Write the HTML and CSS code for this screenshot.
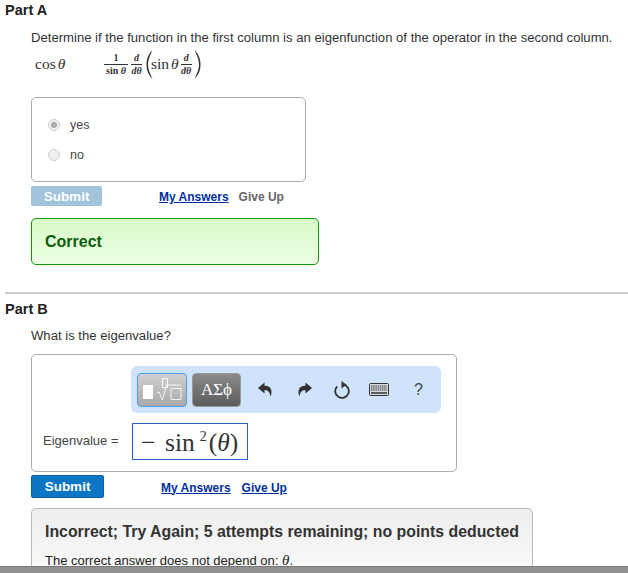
FILE: index.html
```html
<!DOCTYPE html>
<html lang="en">
<head>
<meta charset="utf-8">
<title>Part A and Part B</title>
<link rel="stylesheet" href="styles.css">
</head>
<body>
<section class="part part-a">
  <h2 class="part-title">Part A</h2>
  <div class="part-body">
    <p class="prompt">Determine if the function in the first column is an eigenfunction of the operator in the second column.</p>
    <div class="math-row">
      <div class="math fn">cos<i class="theta">θ</i></div>
      <div class="math op">
        <span class="frac wide"><span class="num">1</span><span class="den">sin <i>θ</i></span></span>
        <span class="frac plain"><span class="num"><i>d</i></span><span class="den"><i>dθ</i></span></span>
        <svg class="paren left" viewBox="0 0 9 30" width="9" height="31"><path d="M7.500 .5C3 5 1.500 10 1.500 15s1.500 10 6 14.500C5 24 3 20 3 15S5 6 7.500 .5Z"/></svg>
        <span class="sin">sin<i class="theta">θ</i></span>
        <span class="frac tight"><span class="num"><i>d</i></span><span class="den"><i>dθ</i></span></span>
        <svg class="paren right" viewBox="0 0 9 30" width="9" height="31"><path d="M1.500 .5C6 5 7.500 10 7.500 15s-1.500 10-6 14.500C4 24 6 20 6 15S4 6 1.500 .5Z"/></svg>
      </div>
    </div>
    <div class="answer-box choices">
      <label class="choice"><span class="radio checked"></span>yes</label>
      <label class="choice"><span class="radio"></span>no</label>
    </div>
    <div class="actions">
      <button class="submit disabled" type="button">Submit</button>
      <a class="link first" href="#">My Answers</a>
      <span class="give-up-muted">Give Up</span>
    </div>
    <div class="feedback correct">Correct</div>
  </div>
</section>
<hr class="divider">
<section class="part part-b">
  <h2 class="part-title">Part B</h2>
  <div class="part-body">
    <p class="prompt">What is the eigenvalue?</p>
    <div class="answer-box editor">
      <div class="toolbar">
        <div class="tool tool-templates">
          <span class="blank"></span>
          <svg width="26" height="24" viewBox="0 0 26 24" class="radical"><path d="M6.500 .5h5v9h-5zM1 15l2-1 3.500 8 4-15H25M15 10.500h10v11H15z" fill="none" stroke="#fff" stroke-opacity=".85" stroke-width="1"/></svg>
        </div>
        <div class="tool tool-symbols">ΑΣϕ</div>
        <svg class="icon undo" width="15" height="15" viewBox="0 0 15 15"><path d="M6.500 .5 0 6l6.500 5.500V8.200c3.500-.2 5 1.300 6.200 6.300C15 8 12.500 3.500 6.500 3.700z"/></svg>
        <svg class="icon redo" width="15" height="15" viewBox="0 0 15 15"><path d="m8.500 .5 6.500 5.500-6.500 5.500V8.200c-3.500-.2-5 1.300-6.200 6.300C0 8 2.500 3.500 8.500 3.700z"/></svg>
        <svg class="icon reset" width="18" height="18" viewBox="0 0 18 18"><path d="M10 3.400A6.800 6.800 0 1 1 4.200 5.300" fill="none" stroke="#333" stroke-width="1.800"/><path d="M8.500 0v7.500L13.500 3.700z"/></svg>
        <svg class="icon keys" width="20" height="13" viewBox="0 0 20 13"><rect x=".5" y=".5" width="19" height="12" rx="1" fill="#d5dae0" stroke="#333"/><path d="M2 3h16M2 5h16M2 7h16" stroke="#333" stroke-dasharray="1.500 .7"/><path d="M2 10h16" stroke="#333" stroke-width="1.500"/></svg>
        <span class="help">?</span>
      </div>
      <div class="entry">
        <label class="entry-label">Eigenvalue =</label>
        <div class="entry-field"><span class="minus">−</span><span class="sin-big">sin</span><sup>2</sup><span class="arg">(<i>θ</i>)</span></div>
      </div>
    </div>
    <div class="actions actions-b">
      <button class="submit" type="button">Submit</button>
      <a class="link first" href="#">My Answers</a>
      <a class="link" href="#">Give Up</a>
    </div>
    <div class="feedback incorrect">
      <div class="feedback-title">Incorrect; Try Again; 5 attempts remaining; no points deducted</div>
      <p class="hint">The correct answer does not depend on: <i class="hint-theta">θ</i>.</p>
    </div>
  </div>
</section>
<div class="bottom-bar"></div>
</body>
</html>
```
FILE: styles.css
```css
* { box-sizing: border-box; }
html, body { margin: 0; height: 573px; overflow: hidden; background: #fff; }
body { font-family: "Liberation Sans", Arial, sans-serif; font-size: 12px; color: #333; }
.part-title { margin: 0; padding-left: 5px; font-size: 14.500px; line-height: 16px; font-weight: bold; color: #222; }
.part-a { padding-top: 2px; }
.part-body { padding-left: 31px; }
.prompt { margin: 0; font-size: 13.120px; line-height: 14px; color: #333; }
.part-a .prompt { margin-top: 13px; }
.math-row { display: flex; height: 36px; margin-top: 3px; padding-bottom: 4px; font-family: "Liberation Serif", serif; color: #333; }
.math { display: flex; align-items: center; }
.fn { width: 73px; padding-left: 4px; font-size: 15.500px; }
.theta { margin-left: 2px; }
.frac { display: inline-flex; flex-direction: column; align-items: center; font-size: 10px; font-weight: bold; line-height: 11px; }
.frac .num { align-self: stretch; text-align: center; padding-bottom: 1px; border-bottom: 1px solid #333; }
.frac.wide { width: 24px; }
.frac.plain { margin-left: 3px; width: 11px; }
.frac.tight { width: 11px; margin-left: 2px; }
.paren { fill: #333; flex: none; }
.paren.left { margin-left: 3px; }
.paren.right { margin-left: 1px; }
.sin { font-size: 15.500px; white-space: nowrap; margin-left: -3px; }
.answer-box { border: 1px solid #aaa; border-radius: 5px; width: 275px; background: #fff; }
.choices { height: 85px; margin-top: 13px; padding-top: 12px; }
.choice { display: flex; align-items: center; height: 30px; padding-left: 16px; gap: 10px; font-size: 12.500px; color: #444; }
.radio { width: 12px; height: 12px; border-radius: 50%; border: 1px solid #d0d0d0; background: #efefef; display: flex; align-items: center; justify-content: center; }
.radio.checked::after { content: ""; width: 6px; height: 6px; border-radius: 50%; background: #aaa; }
.actions { display: flex; align-items: center; height: 20px; margin-top: 4px; font-size: 12px; font-weight: bold; }
.submit { font-family: inherit; font-size: 13.500px; font-weight: bold; color: #fff; width: 71px; height: 20px; padding: 0; border: 0; border-radius: 2px; background: #a2c3dc; }
.link { margin-top: 2px; color: #00309c; text-decoration: underline; }
.link.first { margin-left: 57px; }
.give-up-muted { margin-top: 2px; margin-left: 10px; color: #666; }
.feedback { border-radius: 5px; }
.correct { display: flex; align-items: center; width: 288px; height: 47px; margin-top: 12px; padding-left: 13px; border: 1px solid #0a9a0a; background: linear-gradient(#d8fbc8, #edfde4); color: #0d5c0d; font-size: 16px; font-weight: bold; }
.divider { height: 2px; margin: 27px 0 0 5px; border: 0; background: #ccc; }
.part-b { padding-top: 7px; }
.part-b .prompt { margin-top: 12px; }
.editor { width: 426px; height: 118px; margin-top: 11px; padding: 11px 0 0 99px; }
.toolbar { display: flex; align-items: center; width: 310px; height: 47px; padding-left: 6px; border-radius: 6px; background: #cfe4fb; }
.tool { display: flex; align-items: center; justify-content: center; height: 34px; border-radius: 4px; }
.tool-templates { width: 50px; gap: 3px; border: 1px solid #4a9df0; background: linear-gradient(#d0d0d0, #a8a8a8); }
.blank { width: 10px; height: 14px; margin-top: 5px; background: #fff; }
.tool-symbols { width: 49px; margin-left: 5px; border: 1px solid #999; background: linear-gradient(#8a8a8a, #5c5c5c); color: #fff; font-family: "Liberation Serif", serif; font-size: 17px; }
.icon { fill: #333; flex: none; }
.undo { margin-left: 17px; }
.redo { margin-left: 24px; }
.reset { margin-left: 21px; }
.keys { margin-left: 18px; }
.help { margin-left: 25px; font-size: 16px; color: #444; }
.entry { display: flex; align-items: center; height: 37px; margin: 10px 0 0 -88px; }
.entry-label { width: 89px; padding-bottom: 2px; font-size: 13px; color: #444; }
.entry-field { display: flex; align-items: baseline; width: 116px; height: 37px; padding: 2px 0 0 8px; border: 1px solid #2b62c8; font-family: "Liberation Serif", serif; font-size: 25.500px; line-height: 33px; color: #333; }
.minus { width: 24px; font-size: 26px; }
.entry-field sup { font-size: 14px; line-height: 0; margin: 0 2px 0 5px; position: relative; top: -10px; }
.actions-b { height: 23px; margin-top: 3px; }
.actions-b .submit { width: 73px; height: 23px; background: #0c75c4; border: 1px solid #0a62a8; }
.actions-b .link.first { margin-left: 57px; }
.actions-b .link + .link { margin-left: 11px; }
.incorrect { width: 502px; height: 70px; margin-top: 10px; padding: 14px 13px 0; border: 1px solid #bbb; background: linear-gradient(#eee, #fafafa); }
.feedback-title { font-size: 15.850px; line-height: 18px; font-weight: bold; white-space: nowrap; color: #333; }
.hint { margin: 12px 0 0; font-size: 13px; line-height: 14px; color: #222; }
.hint-theta { font-family: "Liberation Serif", serif; font-size: 15px; }
.bottom-bar { position: fixed; left: 0; right: 0; bottom: 0; height: 7px; background: #919191; border-top: 1px solid #777; }
```
